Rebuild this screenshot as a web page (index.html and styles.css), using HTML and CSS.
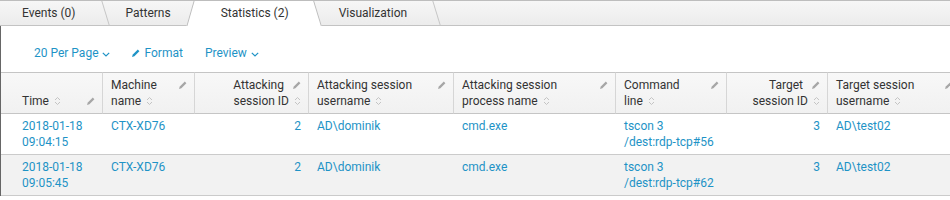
FILE: index.html
```html
<!DOCTYPE html>
<html>
<head>
<meta charset="utf-8">
<link rel="stylesheet" href="styles.css">
</head>
<body>
<div class="tabbar">
  <div class="tab tab-events">Events (0)</div>
  <div class="tab tab-patterns no-sep">Patterns</div>
  <div class="tab tab-stats active">Statistics (2)</div>
  <div class="tab tab-vis">Visualization</div>
</div>
<div class="content">
  <div class="toolbar">
    <a class="tool">20 Per Page <svg class="chev" width="8" height="5" viewBox="0 0 8 5"><path d="M0.8 0.8 L4 4 L7.2 0.8" fill="none" stroke="#1e93c6" stroke-width="1.2"/></svg></a>
    <a class="tool"><svg class="pen" width="8" height="8" viewBox="0 0 8 8"><path d="M0 8 L0.8 5.6 L5.8 0.6 L7.4 2.2 L2.4 7.2 Z" fill="#1e93c6"/></svg>Format</a>
    <a class="tool">Preview <svg class="chev" width="8" height="5" viewBox="0 0 8 5"><path d="M0.8 0.8 L4 4 L7.2 0.8" fill="none" stroke="#1e93c6" stroke-width="1.2"/></svg></a>
  </div>
  <div class="results">
    <table>
      <colgroup>
        <col class="c1"><col class="c2"><col class="c3"><col class="c4"><col class="c5"><col class="c6"><col class="c7"><col class="c8">
      </colgroup>
      <thead>
        <tr>
          <th class="first"><span class="edit"><svg width="8" height="8" viewBox="0 0 8 8"><path d="M0 8 L0.8 5.6 L5.8 0.6 L7.4 2.2 L2.4 7.2 Z" fill="#a6a6a6"/></svg></span><span class="nw">Time<svg class="sort" width="7" height="10" viewBox="0 0 7 10"><path d="M1 4 L3.5 1.5 L6 4 M1 6 L3.5 8.5 L6 6" fill="none" stroke="#c4c4c4" stroke-width="1"/></svg></span></th>
          <th><span class="edit"><svg width="8" height="8" viewBox="0 0 8 8"><path d="M0 8 L0.8 5.6 L5.8 0.6 L7.4 2.2 L2.4 7.2 Z" fill="#a6a6a6"/></svg></span>Machine <span class="nw">name<svg class="sort" width="7" height="10" viewBox="0 0 7 10"><path d="M1 4 L3.5 1.5 L6 4 M1 6 L3.5 8.5 L6 6" fill="none" stroke="#c4c4c4" stroke-width="1"/></svg></span></th>
          <th class="num"><span class="edit"><svg width="8" height="8" viewBox="0 0 8 8"><path d="M0 8 L0.8 5.6 L5.8 0.6 L7.4 2.2 L2.4 7.2 Z" fill="#a6a6a6"/></svg></span>Attacking<br>session <span class="nw">ID<svg class="sort" width="7" height="10" viewBox="0 0 7 10"><path d="M1 4 L3.5 1.5 L6 4 M1 6 L3.5 8.5 L6 6" fill="none" stroke="#c4c4c4" stroke-width="1"/></svg></span></th>
          <th><span class="edit"><svg width="8" height="8" viewBox="0 0 8 8"><path d="M0 8 L0.8 5.6 L5.8 0.6 L7.4 2.2 L2.4 7.2 Z" fill="#a6a6a6"/></svg></span>Attacking session<br><span class="nw">username<svg class="sort" width="7" height="10" viewBox="0 0 7 10"><path d="M1 4 L3.5 1.5 L6 4 M1 6 L3.5 8.5 L6 6" fill="none" stroke="#c4c4c4" stroke-width="1"/></svg></span></th>
          <th><span class="edit"><svg width="8" height="8" viewBox="0 0 8 8"><path d="M0 8 L0.8 5.6 L5.8 0.6 L7.4 2.2 L2.4 7.2 Z" fill="#a6a6a6"/></svg></span>Attacking session<br>process <span class="nw">name<svg class="sort" width="7" height="10" viewBox="0 0 7 10"><path d="M1 4 L3.5 1.5 L6 4 M1 6 L3.5 8.5 L6 6" fill="none" stroke="#c4c4c4" stroke-width="1"/></svg></span></th>
          <th><span class="edit"><svg width="8" height="8" viewBox="0 0 8 8"><path d="M0 8 L0.8 5.6 L5.8 0.6 L7.4 2.2 L2.4 7.2 Z" fill="#a6a6a6"/></svg></span>Command<br><span class="nw">line<svg class="sort" width="7" height="10" viewBox="0 0 7 10"><path d="M1 4 L3.5 1.5 L6 4 M1 6 L3.5 8.5 L6 6" fill="none" stroke="#c4c4c4" stroke-width="1"/></svg></span></th>
          <th class="num"><span class="edit"><svg width="8" height="8" viewBox="0 0 8 8"><path d="M0 8 L0.8 5.6 L5.8 0.6 L7.4 2.2 L2.4 7.2 Z" fill="#a6a6a6"/></svg></span>Target<br>session <span class="nw">ID<svg class="sort" width="7" height="10" viewBox="0 0 7 10"><path d="M1 4 L3.5 1.5 L6 4 M1 6 L3.5 8.5 L6 6" fill="none" stroke="#c4c4c4" stroke-width="1"/></svg></span></th>
          <th><span class="edit"><svg width="8" height="8" viewBox="0 0 8 8"><path d="M0 8 L0.8 5.6 L5.8 0.6 L7.4 2.2 L2.4 7.2 Z" fill="#a6a6a6"/></svg></span>Target session<br><span class="nw">username<svg class="sort" width="7" height="10" viewBox="0 0 7 10"><path d="M1 4 L3.5 1.5 L6 4 M1 6 L3.5 8.5 L6 6" fill="none" stroke="#c4c4c4" stroke-width="1"/></svg></span></th>
        </tr>
      </thead>
      <tbody>
        <tr>
          <td class="first">2018-01-18 09:04:15</td>
          <td>CTX-XD76</td>
          <td class="num">2</td>
          <td>AD\dominik</td>
          <td>cmd.exe</td>
          <td>tscon 3 <span class="nw">/dest:rdp-tcp#56</span></td>
          <td class="num">3</td>
          <td>AD\test02</td>
        </tr>
        <tr class="odd">
          <td class="first">2018-01-18 09:05:45</td>
          <td>CTX-XD76</td>
          <td class="num">2</td>
          <td>AD\dominik</td>
          <td>cmd.exe</td>
          <td>tscon 3 <span class="nw">/dest:rdp-tcp#62</span></td>
          <td class="num">3</td>
          <td>AD\test02</td>
        </tr>
      </tbody>
    </table>
  </div>
</div>
</body>
</html>
```

FILE: styles.css
```css
html, body {
  margin: 0;
  padding: 0;
  background: #fff;
}
body {
  font-family: Roboto, "Liberation Sans", Arial, sans-serif;
  font-size: 12px;
  color: #333;
  width: 950px;
  overflow: hidden;
}

/* tabs */
.tabbar {
  display: flex;
  height: 24px;
  border-top: 1px solid #bdbdbd;
  border-bottom: 1px solid #c3c3c3;
  background: linear-gradient(#f6f6f6, #ececec);
}
.tab {
  position: relative;
  z-index: 0;
  line-height: 24px;
  color: #333;
  white-space: nowrap;
}
.tab::after {
  content: "";
  position: absolute;
  top: 0;
  bottom: 0;
  right: 0;
  border-right: 1px solid #c6c6c6;
  transform: skewX(17deg);
}
.tab.no-sep::after {
  display: none;
}
.tab-events { padding: 0 30px 0 22px; }
.tab-patterns { padding: 0 19px 0 20px; }
.tab-stats { padding: 0 30px 0 31px; }
.tab-vis { padding: 0 30px 0 20px; }

.tab.active {
  z-index: 1;
}
.tab.active::before,
.tab.active::after {
  content: "";
  position: absolute;
  top: 0;
  bottom: -1px;
  width: 60%;
  background: #fff;
  z-index: -1;
}
.tab.active::before {
  left: 0;
  right: auto;
  border-left: 1px solid #bdbdbd;
  transform: skewX(-16deg);
}
.tab.active::after {
  right: 0;
  left: auto;
  border-right: 1px solid #bdbdbd;
  transform: skewX(17deg);
}

/* content */
.content {
  border-left: 1px solid #666;
}
.toolbar {
  display: flex;
  align-items: center;
  padding: 19px 0 11px 33px;
  line-height: 16px;
}
.tool {
  display: flex;
  align-items: center;
  color: #1e93c6;
  text-decoration: none;
  white-space: pre;
  margin-right: 22px;
}
.tool .chev {
  margin-left: 1px;
  margin-top: 2px;
}
.tool .pen {
  margin-right: 4px;
}

.results {
  overflow: hidden;
}
table {
  border-collapse: separate;
  border-spacing: 0;
  table-layout: fixed;
  width: 960px;
}
col.c1 { width: 102px; }
col.c2 { width: 92px; }
col.c3 { width: 114px; }
col.c4 { width: 145px; }
col.c5 { width: 162px; }
col.c6 { width: 111px; }
col.c7 { width: 101px; }
col.c8 { width: 133px; }

th {
  background: linear-gradient(#f8f8f8, #f1f1f1);
  border-top: 1px solid #c5c5c5;
  border-bottom: 1px solid #c5c5c5;
  border-right: 1px solid #d6d6d6;
  padding: 4px 7px 4px 8px;
  font-weight: normal;
  text-align: left;
  vertical-align: bottom;
  line-height: 16px;
  color: #333;
}
th.num, td.num {
  text-align: right;
}
th.first, td.first {
  padding-left: 21px;
}
.edit {
  float: right;
  height: 16px;
  display: flex;
  align-items: center;
  margin-left: 9px;
}
.nw {
  white-space: nowrap;
}
.sort {
  vertical-align: -1px;
  margin-left: 5px;
}

td {
  padding: 4px 8px;
  border-bottom: 1px solid #cbcbcb;
  vertical-align: top;
  line-height: 16px;
  color: #1e93c6;
  background: #fff;
}
tr.odd td {
  background: #f2f2f2;
}
```
